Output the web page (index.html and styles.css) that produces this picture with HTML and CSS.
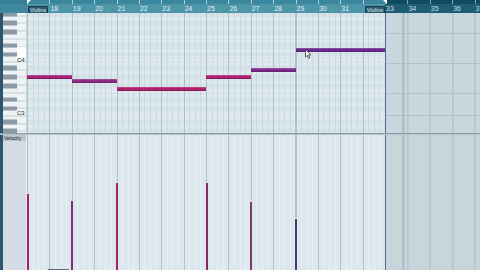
FILE: index.html
```html
<!DOCTYPE html>
<html>
<head>
<meta charset="utf-8">
<link rel="stylesheet" href="styles.css">
</head>
<body>
<div class="app">
  <div class="ruler">
    <div class="corner"></div>
    <div class="ruler-main">
      <div class="bar"><span class="tick"></span><span class="num"></span></div>
      <div class="bar"><span class="tick"></span><span class="num">18</span></div>
      <div class="bar"><span class="tick"></span><span class="num">19</span></div>
      <div class="bar"><span class="tick"></span><span class="num">20</span></div>
      <div class="bar"><span class="tick"></span><span class="num">21</span></div>
      <div class="bar"><span class="tick"></span><span class="num">22</span></div>
      <div class="bar"><span class="tick"></span><span class="num">23</span></div>
      <div class="bar"><span class="tick"></span><span class="num">24</span></div>
      <div class="bar"><span class="tick"></span><span class="num">25</span></div>
      <div class="bar"><span class="tick"></span><span class="num">26</span></div>
      <div class="bar"><span class="tick"></span><span class="num">27</span></div>
      <div class="bar"><span class="tick"></span><span class="num">28</span></div>
      <div class="bar"><span class="tick"></span><span class="num">29</span></div>
      <div class="bar"><span class="tick"></span><span class="num">30</span></div>
      <div class="bar"><span class="tick"></span><span class="num">31</span></div>
      <div class="bar"><span class="tick"></span><span class="num"></span></div>
      <span class="loc-label left">Violins</span>
      <span class="loc-label right">Violins</span>
      <span class="tri left"></span>
      <span class="tri right"></span>
    </div>
    <div class="ruler-after">
      <div class="bar"><span class="tick"></span><span class="num">33</span></div>
      <div class="bar"><span class="tick"></span><span class="num">34</span></div>
      <div class="bar"><span class="tick"></span><span class="num">35</span></div>
      <div class="bar"><span class="tick"></span><span class="num">36</span></div>
      <div class="bar"><span class="tick"></span><span class="num">37</span></div>
    </div>
  </div>

  <div class="roll">
    <div class="keys">
      <div class="edge"></div>
      <div class="keybed">
        <span class="key-hl"></span>
        <span class="key-label c4">C4</span>
        <span class="key-label c3">C3</span>
      </div>
    </div>
    <div class="roll-main">
      <div class="note n1" style="left:0px;top:62px;width:44.75px"></div>
      <div class="note n2" style="left:44.75px;top:66px;width:44.75px"></div>
      <div class="note n3" style="left:89.5px;top:74px;width:89.5px"></div>
      <div class="note n4" style="left:179px;top:62px;width:44.75px"></div>
      <div class="note n5" style="left:223.75px;top:55px;width:44.75px"></div>
      <div class="note n6" style="left:268.5px;top:35px;width:89.5px"></div>
      <svg class="cursor" width="7" height="10" viewBox="0 0 7 10">
        <path d="M0.5 0.5 L0.5 8 L2.3 6.3 L3.6 9.3 L4.8 8.8 L3.6 5.9 L6 5.9 Z" fill="#ffffff" stroke="#333a44" stroke-width="0.8"/>
      </svg>
    </div>
    <div class="roll-after"></div>
  </div>

  <div class="sep"></div>

  <div class="vel">
    <div class="vel-side">
      <div class="edge"></div>
      <div class="vel-panel">
        <span class="vel-label">Velocity</span>
      </div>
    </div>
    <div class="vel-main">
      <div class="vbar v1" style="left:0px;top:58px"></div>
      <div class="vbar v2" style="left:44px;top:65px"></div>
      <div class="vbar v3" style="left:89px;top:47px"></div>
      <div class="vbar v4" style="left:179px;top:47px"></div>
      <div class="vbar v5" style="left:223px;top:66px"></div>
      <div class="vbar v6" style="left:268px;top:83px"></div>
      <div class="scrollmark"></div>
    </div>
    <div class="vel-after"></div>
  </div>
</div>
</body>
</html>
```

FILE: styles.css
```css
html, body {
  margin: 0;
  padding: 0;
  width: 480px;
  height: 270px;
  overflow: hidden;
  font-family: "Liberation Sans", Arial, sans-serif;
}

.app {
  display: flex;
  flex-direction: column;
  width: 480px;
  height: 270px;
}

/* ---------- ruler ---------- */
.ruler {
  display: flex;
  height: 13px;
  flex: none;
}

.corner {
  width: 27px;
  flex: none;
  background: linear-gradient(#357f95 0 4px, #3f889d 4px);
}

.ruler-main {
  position: relative;
  width: 358px;
  flex: none;
  display: flex;
  background: linear-gradient(#3a869c 0 4px, #4d96aa 4px);
}

.ruler-after {
  flex: 1;
  display: flex;
  overflow: hidden;
  background: linear-gradient(#0e4b60 0 4px, #1e5e74 4px);
}

.bar {
  flex: none;
  width: 22.375px;
  display: flex;
  flex-direction: column;
}

.tick {
  width: 1px;
  height: 4px;
  background: #a9d2dc;
}

.ruler-after .tick {
  background: #7fa9b6;
}

.num {
  font-size: 7px;
  line-height: 8px;
  padding-left: 1px;
  margin-top: 1px;
  color: #e2f0f4;
}

.ruler-after .num {
  color: #c9dde3;
}

.loc-label {
  position: absolute;
  top: 6px;
  height: 6px;
  padding: 0 1px;
  font-size: 5.5px;
  line-height: 6px;
  color: #dbe9ee;
  background: #2b5d70;
  border: 1px solid #183c4b;
  box-sizing: content-box;
}

.loc-label.left {
  left: 1px;
}

.loc-label.right {
  right: 0px;
}

.tri {
  position: absolute;
  top: 0;
  width: 0;
  height: 0;
}

.tri.left {
  left: 0;
  border-top: 4px solid #ffffff;
  border-right: 4px solid transparent;
}

.tri.right {
  right: -2px;
  border-top: 4px solid #ffffff;
  border-left: 4px solid transparent;
}

/* ---------- piano roll ---------- */
.roll {
  display: flex;
  height: 120px;
  flex: none;
}

.keys {
  width: 27px;
  flex: none;
  display: flex;
}

.edge {
  width: 3px;
  flex: none;
  background: #2c5670;
}

.keybed {
  flex: 1;
  position: relative;
  border-right: 1px solid #c9d6dc;
  background-color: #eef3f5;
  background-image:
    linear-gradient(180deg,
      transparent 0 4.5px, #8c9aa3 4.5px 9px,
      transparent 9px 13.5px, #8c9aa3 13.5px 18px,
      transparent 18px 22.5px, #8c9aa3 22.5px 27px,
      transparent 27px 36px, #8c9aa3 36px 40.5px,
      transparent 40.5px 45px, #8c9aa3 45px 49.5px,
      transparent 49.5px),
    repeating-linear-gradient(180deg, #c6cfd4 0 1px, transparent 1px 7.714px);
  background-size: 14px 54px, 100% 54px;
  background-repeat: repeat-y, repeat;
  background-position: 0 -5.5px, 0 -5.5px;
}

.key-hl {
  position: absolute;
  left: 14px;
  top: 34px;
  width: 9px;
  height: 10px;
  background: #ffffff;
}

.key-label {
  position: absolute;
  left: 14px;
  font-size: 6px;
  line-height: 6px;
  color: #26323a;
}

.key-label.c4 { top: 44px; }
.key-label.c3 { top: 97px; }

.roll-main {
  position: relative;
  width: 358px;
  flex: none;
  background-color: #dfeaef;
  background-image:
    repeating-linear-gradient(90deg, #afc0c8 0 1px, transparent 1px 22.375px),
    repeating-linear-gradient(90deg, #ccdae0 0 1px, transparent 1px 5.59375px),
    repeating-linear-gradient(180deg, #d3e1e7 0 1px, transparent 1px 4.5px),
    linear-gradient(180deg,
      transparent 0 4.5px, #d6e3e9 4.5px 9px,
      transparent 9px 13.5px, #d6e3e9 13.5px 18px,
      transparent 18px 22.5px, #d6e3e9 22.5px 27px,
      transparent 27px 36px, #d6e3e9 36px 40.5px,
      transparent 40.5px 45px, #d6e3e9 45px 49.5px,
      transparent 49.5px);
  background-size: auto, auto, 100% 4.5px, 100% 54px;
  background-position: 0 0, 0 0, 0 -5.5px, 0 -5.5px;
}

.roll-after {
  flex: 1;
  border-left: 1px solid #5c6194;
  background-color: #c8d7dd;
  background-image:
    repeating-linear-gradient(90deg, #aab9c1 0 1px, transparent 1px 22.375px),
    linear-gradient(180deg,
      transparent 0 20px, #b2c1c8 20px 21px,
      transparent 21px 50px, #b2c1c8 50px 51px,
      transparent 51px 80px, #b2c1c8 80px 81px,
      transparent 81px 102px, #b2c1c8 102px 103px,
      transparent 103px);
  background-position: 21.375px 0, 0 0;
}

.note {
  position: absolute;
  height: 4px;
  box-sizing: border-box;
  border-top: 1px solid rgba(255, 255, 255, 0.15);
  border-bottom: 1px solid rgba(0, 0, 0, 0.2);
}

.n1 { background: #a3237a; }
.n2 { background: #8c2a84; }
.n3 { background: #b3206f; }
.n4 { background: #ae2174; }
.n5 { background: #7d2a8c; }
.n6 { background: #6a2b8f; }

.cursor {
  position: absolute;
  left: 278px;
  top: 36px;
}

/* ---------- separator ---------- */
.sep {
  height: 2px;
  flex: none;
  background: linear-gradient(#8c9da6 0 1px, #b5c3ca 1px);
}

/* ---------- velocity lane ---------- */
.vel {
  flex: 1;
  display: flex;
  min-height: 0;
}

.vel-side {
  width: 27px;
  flex: none;
  display: flex;
}

.vel-panel {
  flex: 1;
  display: flex;
  flex-direction: column;
  background: #d5dce5;
  border-right: 1px solid #e6ecef;
}

.vel-label {
  height: 6px;
  font-size: 5px;
  line-height: 6px;
  padding-left: 1px;
  color: #1e2a33;
  background: #b9c5cd;
}

.vel-main {
  position: relative;
  width: 358px;
  flex: none;
  background-color: #dce8ee;
  background-image:
    repeating-linear-gradient(90deg, #b0c1c9 0 1px, transparent 1px 22.375px),
    repeating-linear-gradient(90deg, #e8f0f3 0 1px, transparent 1px 5.59375px);
}

.vel-after {
  flex: 1;
  border-left: 1px solid #5c6194;
  background-color: #c8d6dc;
  background-image:
    repeating-linear-gradient(90deg, #aab9c1 0 1px, transparent 1px 22.375px);
  background-position: 21.375px 0;
}

.vbar {
  position: absolute;
  bottom: 0;
  width: 2px;
  border-top: 1px solid #f3dbe8;
}

.v1 { background: #a4206a; }
.v2 { background: #7c3272; }
.v3 { background: #9c2266; }
.v4 { background: #8a2a64; }
.v5 { background: #7a386c; }
.v6 { background: #4d3c6c; }

.scrollmark {
  position: absolute;
  left: 21px;
  bottom: 0;
  width: 21px;
  height: 1px;
  background: #5e6877;
}
```
